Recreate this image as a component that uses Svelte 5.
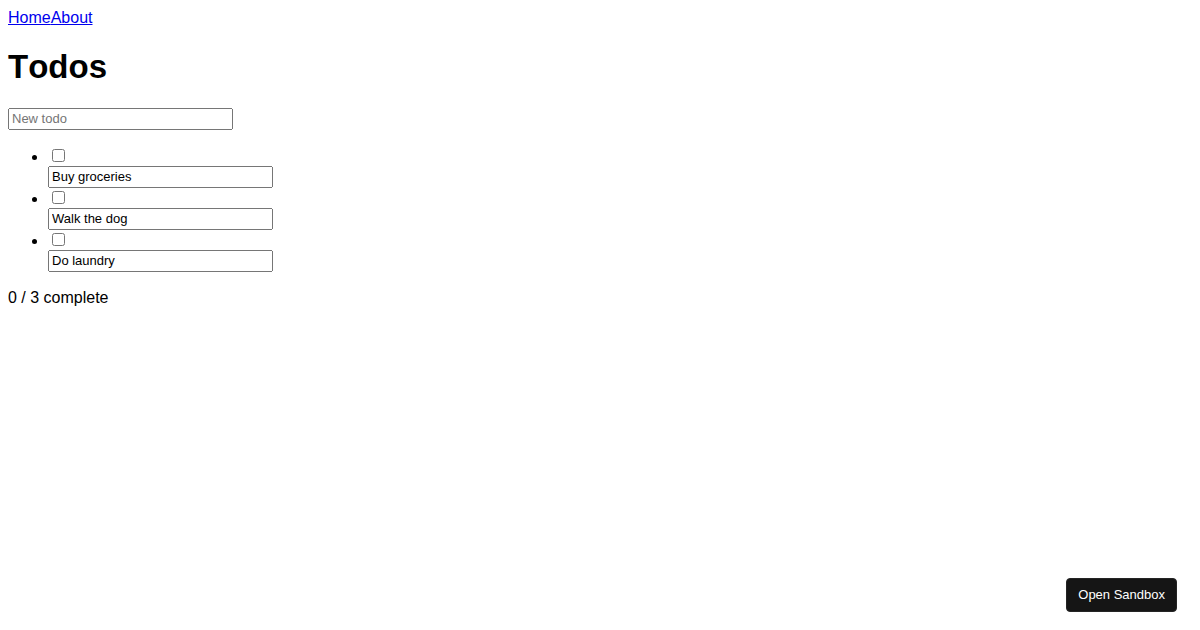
<script>
  let todos = $state([
    { id: 1, text: 'Buy groceries', done: false },
    { id: 2, text: 'Walk the dog', done: false },
    { id: 3, text: 'Do laundry', done: false }
  ]);
  let draft = $state('');
  let completed = $derived(todos.filter((t) => t.done).length);

  function addTodo(event) {
    if (event.key !== 'Enter' || !draft.trim()) return;
    todos.push({ id: Date.now(), text: draft.trim(), done: false });
    draft = '';
  }
</script>

<nav><a href="#home">Home</a><a href="#about">About</a></nav>

<main>
  <h1>Todos</h1>
  <input class="field" type="text" placeholder="New todo" aria-label="New todo" bind:value={draft} onkeydown={addTodo} />
  <ul>
    {#each todos as todo (todo.id)}
      <li>
        <input class="check" type="checkbox" aria-label="Done: {todo.text}" bind:checked={todo.done} />
        <input class="field" type="text" aria-label="Todo text" bind:value={todo.text} />
      </li>
    {/each}
  </ul>
  <p>{completed} / {todos.length} complete</p>
</main>

<a class="sandbox" href="#sandbox">Open Sandbox</a>

<style>
  :global(body) {
    margin: 8px;
    font-family: "Nimbus Sans", "Liberation Sans", Arial, sans-serif;
    font-size: 16px;
    color: #000;
    background: #fff;
  }
  nav {
    line-height: 20px;
  }
  h1 {
    margin: 20px 0 22px;
    font-size: 33px;
    font-kerning: none;
    line-height: 38px;
  }
  .field {
    display: block;
    box-sizing: border-box;
    width: 225px;
    height: 22px;
    padding: 0 2px 2px;
    font-family: inherit;
    font-size: 13px;
  }
  ul {
    margin: 16px 0;
    padding-left: 40px;
  }
  li {
    line-height: 18px;
  }
  .check {
    margin: 3px 3px 3px 4px;
  }
  p {
    margin: 16px 0;
    line-height: 20px;
  }
  .sandbox {
    position: fixed;
    right: 23px;
    bottom: 18px;
    box-sizing: border-box;
    padding: 8px 11px;
    border: 1px solid #242424;
    border-radius: 4px;
    background: #151515;
    color: #fff;
    font-size: 13px;
    line-height: 16px;
    text-decoration: none;
  }
</style>
